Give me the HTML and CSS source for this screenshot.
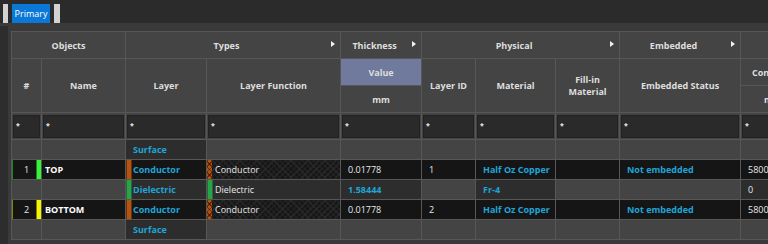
FILE: index.html
```html
<!DOCTYPE html>
<html lang="en">
<head>
    <meta charset="UTF-8">
    <title>Layer Stack</title>
    <link rel="stylesheet" href="styles.css">
</head>
<body>
    <div class="tabbar">
        <span class="tab-edge"></span>
        <span class="tab active">Primary</span>
        <span class="tab-edge"></span>
    </div>
    <div class="tabline"></div>

    <div class="panel">
        <table class="stack">
            <colgroup>
                <col class="c-num">
                <col class="c-name">
                <col class="c-layer">
                <col class="c-func">
                <col class="c-thick">
                <col class="c-id">
                <col class="c-mat">
                <col class="c-fill">
                <col class="c-emb">
                <col class="c-cond">
            </colgroup>
            <thead>
                <tr class="row-group">
                    <th colspan="2">Objects</th>
                    <th colspan="2"><div class="grp"><span class="lbl">Types</span><span class="arrow"></span></div></th>
                    <th><div class="grp"><span class="lbl">Thickness</span><span class="arrow"></span></div></th>
                    <th colspan="3"><div class="grp"><span class="lbl">Physical</span><span class="arrow"></span></div></th>
                    <th><div class="grp"><span class="lbl">Embedded</span><span class="arrow"></span></div></th>
                    <th></th>
                </tr>
                <tr class="row-sub">
                    <th rowspan="2">#</th>
                    <th rowspan="2">Name</th>
                    <th rowspan="2">Layer</th>
                    <th rowspan="2">Layer Function</th>
                    <th class="value">Value</th>
                    <th rowspan="2">Layer ID</th>
                    <th rowspan="2">Material</th>
                    <th rowspan="2" class="two-line">Fill-in<br>Material</th>
                    <th rowspan="2">Embedded Status</th>
                    <th>Conductivity</th>
                </tr>
                <tr class="row-sub">
                    <th>mm</th>
                    <th>mho/m</th>
                </tr>
                <tr class="row-filter">
                    <td><div class="filter">*</div></td>
                    <td><div class="filter">*</div></td>
                    <td><div class="filter">*</div></td>
                    <td><div class="filter">*</div></td>
                    <td><div class="filter">*</div></td>
                    <td><div class="filter">*</div></td>
                    <td><div class="filter">*</div></td>
                    <td><div class="filter">*</div></td>
                    <td><div class="filter">*</div></td>
                    <td><div class="filter">*</div></td>
                </tr>
            </thead>
            <tbody>
                <tr class="row-plain">
                    <td></td>
                    <td></td>
                    <td class="soft cyan">Surface</td>
                    <td></td>
                    <td></td>
                    <td></td>
                    <td></td>
                    <td></td>
                    <td></td>
                    <td></td>
                </tr>
                <tr class="row-layer">
                    <td class="num mark-green">1</td>
                    <td class="name">TOP</td>
                    <td class="kind conductor cyan">Conductor</td>
                    <td class="func conductor">Conductor</td>
                    <td>0.01778</td>
                    <td>1</td>
                    <td class="cyan">Half Oz Copper</td>
                    <td></td>
                    <td class="cyan">Not embedded</td>
                    <td>5800000</td>
                </tr>
                <tr class="row-plain row-diel">
                    <td></td>
                    <td></td>
                    <td class="soft kind dielectric cyan">Dielectric</td>
                    <td class="soft func dielectric">Dielectric</td>
                    <td class="soft cyan">1.58444</td>
                    <td></td>
                    <td class="soft cyan">Fr-4</td>
                    <td></td>
                    <td></td>
                    <td class="soft">0</td>
                </tr>
                <tr class="row-layer">
                    <td class="num mark-yellow">2</td>
                    <td class="name">BOTTOM</td>
                    <td class="kind conductor cyan">Conductor</td>
                    <td class="func conductor">Conductor</td>
                    <td>0.01778</td>
                    <td>2</td>
                    <td class="cyan">Half Oz Copper</td>
                    <td></td>
                    <td class="cyan">Not embedded</td>
                    <td>5800000</td>
                </tr>
                <tr class="row-plain">
                    <td></td>
                    <td></td>
                    <td class="soft cyan">Surface</td>
                    <td></td>
                    <td></td>
                    <td></td>
                    <td></td>
                    <td></td>
                    <td></td>
                    <td></td>
                </tr>
            </tbody>
        </table>
    </div>
</body>
</html>
```

FILE: styles.css
```css
* {
    margin: 0;
    padding: 0;
    box-sizing: border-box;
}

body {
    width: 768px;
    height: 244px;
    overflow: hidden;
    background-color: #2d2d2d;
    color: #e8e8e8;
    font-family: 'Open Sans', 'Noto Sans', sans-serif;
    font-size: 9px;
}

/* Tabs */
.tabbar {
    height: 23px;
    display: flex;
    align-items: flex-end;
    gap: 4px;
    padding-left: 3px;
    background-color: #2b2b2b;
}

.tab-edge {
    width: 5px;
    height: 19px;
    background-color: #d2d2d2;
}

.tab-edge:last-child {
    width: 6px;
}

.tab {
    width: 38px;
    height: 19px;
    display: flex;
    align-items: center;
    justify-content: center;
    color: #ffffff;
    font-size: 9px;
}

.tab.active {
    background-color: #0a78d6;
}

.tabline {
    height: 3px;
    background-color: #3a3a3a;
}

/* Panel */
.panel {
    margin-left: 8px;
    height: 218px;
    padding: 5px 0 0 3px;
    background-color: #3a3a3a;
    overflow: hidden;
}

/* Table */
.stack {
    border-collapse: collapse;
    table-layout: fixed;
    width: 809px;
}

.c-num { width: 30px; }
.c-name { width: 84px; }
.c-layer { width: 81px; }
.c-func { width: 134px; }
.c-thick { width: 81px; }
.c-id { width: 54px; }
.c-mat { width: 80px; }
.c-fill { width: 64px; }
.c-emb { width: 121px; }
.c-cond { width: 80px; }

.stack th,
.stack td {
    border: 1px solid #575757;
    background-color: #444444;
    white-space: nowrap;
    overflow: hidden;
}

.stack th {
    color: #dedede;
    font-weight: 700;
    text-align: center;
    line-height: 11px;
}

.stack th.two-line {
    line-height: 12px;
}

.row-group th,
.row-sub th {
    height: 27px;
}

.stack th.value {
    background-color: #6f7a9c;
}

.grp {
    display: flex;
    align-items: center;
}

.grp .lbl {
    flex: 1;
    text-align: center;
}

.arrow {
    width: 0;
    height: 0;
    margin: 0 5px 3px 4px;
    border-top: 3.5px solid transparent;
    border-bottom: 3.5px solid transparent;
    border-left: 4px solid #f2f2f2;
}

/* Filter row */
.row-filter td {
    height: 27px;
    padding: 1px;
}

.filter {
    height: 23px;
    padding: 5px 0 0 2px;
    background-color: #2a2a2a;
    border: 1px solid #222222;
    color: #f0f0f0;
    font-size: 7px;
    font-weight: 700;
}

/* Data rows */
.stack tbody td {
    height: 20px;
    padding: 0 0 0 7px;
    font-weight: 400;
    color: #e8e8e8;
}

.row-diel td {
    height: 21px;
}

.row-layer td {
    background-color: #151515;
}

.stack tbody td.soft {
    background-color: #2d2d2d;
}

.stack tbody td.cyan {
    color: #1fa5d8;
    font-weight: 700;
}

.stack tbody td.num {
    padding: 0;
    text-align: center;
}

.stack tbody td.name {
    padding-left: 3px;
    font-weight: 700;
    color: #ffffff;
}

.stack tbody .mark-green {
    background: linear-gradient(to left, #33f533 5px, #151515 5px);
}

.stack tbody .mark-yellow {
    background: linear-gradient(to left, #f5f500 5px, #151515 5px);
}

.stack tbody td.kind.conductor {
    background: linear-gradient(to right, #b4520e 5px, #151515 5px);
}

.stack tbody td.kind.dielectric {
    background: linear-gradient(to right, #27a348 5px, #2d2d2d 5px);
}

.stack tbody td.func {
    padding-left: 8px;
}

.stack tbody td.func.conductor {
    background:
        repeating-linear-gradient(45deg, rgba(0, 0, 0, 0.45) 0 1px, transparent 1px 4px) 0 0 / 5px 100% no-repeat,
        repeating-linear-gradient(-45deg, rgba(0, 0, 0, 0.45) 0 1px, transparent 1px 4px) 0 0 / 5px 100% no-repeat,
        linear-gradient(#b4520e, #b4520e) 0 0 / 5px 100% no-repeat,
        repeating-linear-gradient(45deg, #2a2a2a 0 1px, transparent 1px 4px),
        repeating-linear-gradient(-45deg, #2a2a2a 0 1px, transparent 1px 4px),
        #151515;
}

.stack tbody td.func.dielectric {
    background: linear-gradient(to right, #27a348 5px, #2d2d2d 5px);
}
```
